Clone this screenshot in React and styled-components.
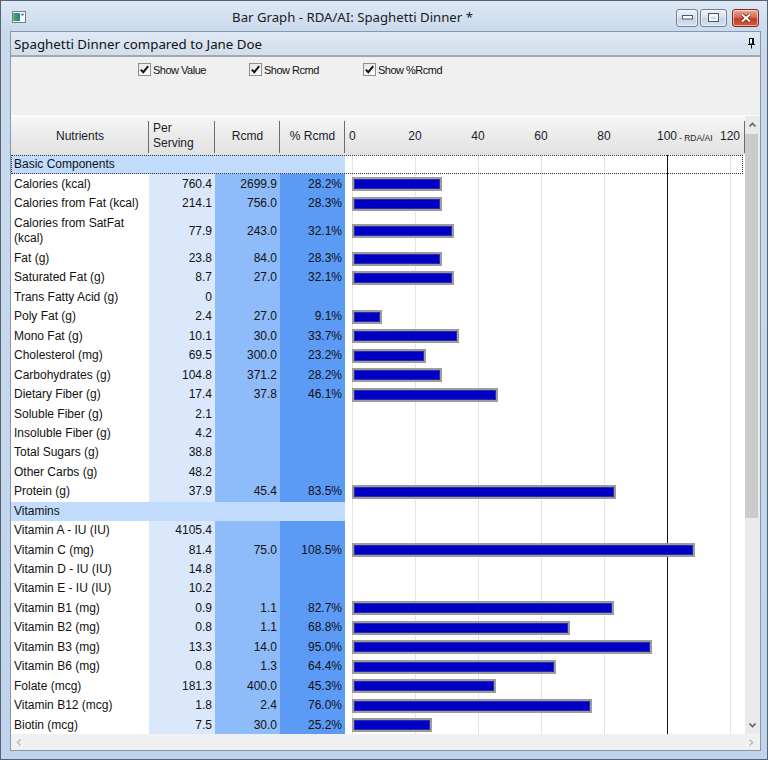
import React from 'react';
import styled, { createGlobalStyle } from 'styled-components';

const GlobalStyle = createGlobalStyle`
  html, body { margin: 0; padding: 0; background: #fff; }
  body { font-family: "Liberation Sans", Arial, sans-serif; color: #000; }
  * { box-sizing: border-box; }
`;

const TICKS = [0, 20, 40, 60, 80, 100, 120];
const SCALE = 3.15;
const ORIGIN = 7;
const COLS = '138px 66px 65px 65px 400px';

const gridLines = TICKS.map((t) => {
  const x = ORIGIN + t * SCALE;
  const c = t === 100 ? '#111' : '#e4e4e4';
  return `linear-gradient(to right, transparent ${x}px, ${c} ${x}px, ${c} ${x + 1}px, transparent ${x + 1}px)`;
}).join(', ');

const sections = [
  {
    title: 'Basic Components',
    focused: true,
    rows: [
      ['Calories (kcal)', '760.4', '2699.9', 28.2],
      ['Calories from Fat (kcal)', '214.1', '756.0', 28.3],
      ['Calories from SatFat (kcal)', '77.9', '243.0', 32.1, true],
      ['Fat (g)', '23.8', '84.0', 28.3],
      ['Saturated Fat (g)', '8.7', '27.0', 32.1],
      ['Trans Fatty Acid (g)', '0', '', null],
      ['Poly Fat (g)', '2.4', '27.0', 9.1],
      ['Mono Fat (g)', '10.1', '30.0', 33.7],
      ['Cholesterol (mg)', '69.5', '300.0', 23.2],
      ['Carbohydrates (g)', '104.8', '371.2', 28.2],
      ['Dietary Fiber (g)', '17.4', '37.8', 46.1],
      ['Soluble Fiber (g)', '2.1', '', null],
      ['Insoluble Fiber (g)', '4.2', '', null],
      ['Total Sugars (g)', '38.8', '', null],
      ['Other Carbs (g)', '48.2', '', null],
      ['Protein (g)', '37.9', '45.4', 83.5],
    ],
  },
  {
    title: 'Vitamins',
    rows: [
      ['Vitamin A - IU (IU)', '4105.4', '', null],
      ['Vitamin C (mg)', '81.4', '75.0', 108.5],
      ['Vitamin D - IU (IU)', '14.8', '', null],
      ['Vitamin E - IU (IU)', '10.2', '', null],
      ['Vitamin B1 (mg)', '0.9', '1.1', 82.7],
      ['Vitamin B2 (mg)', '0.8', '1.1', 68.8],
      ['Vitamin B3 (mg)', '13.3', '14.0', 95.0],
      ['Vitamin B6 (mg)', '0.8', '1.3', 64.4],
      ['Folate (mcg)', '181.3', '400.0', 45.3],
      ['Vitamin B12 (mcg)', '1.8', '2.4', 76.0],
      ['Biotin (mcg)', '7.5', '30.0', 25.2],
    ],
  },
];

const Window = styled.div`
  width: 768px;
  height: 760px;
  display: flex;
  flex-direction: column;
  padding: 0 6px 8px 9px;
  border: 1px solid #59636f;
  background: linear-gradient(#dde8f5, #c9daee 30px, #bfd4ec);
  overflow: hidden;
`;

const TitleBar = styled.div`
  height: 30px;
  flex: none;
  display: grid;
  grid-template-columns: 30px 1fr 96px;
  align-items: center;
`;

const AppIcon = styled.svg`
  margin: 2px 0 0 2px;
`;

const Title = styled.div`
  text-align: center;
  font-family: "Noto Sans", "Liberation Sans", sans-serif;
  font-size: 13.2px;
  color: #1b1b1b;
  padding-top: 2px;
  white-space: nowrap;
`;

const Buttons = styled.div`
  display: flex;
  justify-content: flex-end;
  gap: 2px;
  margin-top: 3px;
  padding-right: 2px;
`;

const WinButton = styled.div`
  width: ${(p) => p.$w}px;
  height: 18px;
  border: 1px solid ${(p) => (p.$close ? '#7a2c20' : '#6f7e90')};
  border-radius: 3px;
  display: flex;
  align-items: center;
  justify-content: center;
  margin-left: ${(p) => (p.$close ? 3 : 0)}px;
  background: ${(p) =>
    p.$close
      ? 'linear-gradient(#eba898, #d86a52 45%, #c73c22 55%, #d25a3e)'
      : 'linear-gradient(#eef3f9, #d6e1ee 45%, #c3d3e6 55%, #d5e2f1)'};
  box-shadow: inset 0 0 0 1px rgba(255, 255, 255, 0.55);
`;

const Client = styled.div`
  flex: 1;
  display: flex;
  flex-direction: column;
  border: 1px solid #8896a6;
  background: #f0f0f0;
  min-height: 0;
`;

const SubHeader = styled.div`
  height: 25px;
  flex: none;
  display: flex;
  align-items: center;
  justify-content: space-between;
  padding: 0 4px 0 3px;
  background: linear-gradient(#dfe8f4, #d2deec);
  border-bottom: 2px solid #a4a8ad;
  font-family: "Noto Sans", "Liberation Sans", sans-serif;
  font-size: 13.3px;
  color: #111;
`;

const Options = styled.div`
  height: 59px;
  flex: none;
  display: flex;
  align-items: flex-start;
  padding: 6px 0 0 127px;
  background: #f0f0f0;
  border-bottom: 1px solid #fbfbfb;
`;

const Option = styled.label`
  width: ${(p) => p.$w}px;
  display: flex;
  align-items: center;
  gap: 2px;
  font-size: 11px;
  letter-spacing: -0.5px;
  color: #111;
`;

const Box = styled.span`
  width: 13px;
  height: 13px;
  border: 1px solid #8e8f8f;
  background: linear-gradient(135deg, #e6e6e6, #fff);
  display: flex;
  align-items: center;
  justify-content: center;
`;

const GridArea = styled.div`
  flex: 1;
  display: flex;
  min-height: 0;
  background: #fff;
`;

const Table = styled.div`
  width: 734px;
  display: flex;
  flex-direction: column;
  overflow: hidden;
`;

const HeaderRow = styled.div`
  height: 39px;
  flex: none;
  display: grid;
  grid-template-columns: ${COLS};
  background: linear-gradient(#f6f6f6, #ececec 45%, #e1e1e1);
  border-top: 1px solid #fff;
  font-size: 12px;
  color: #1a1a2a;
`;

const HeadCell = styled.div`
  position: relative;
  display: flex;
  align-items: center;
  justify-content: ${(p) => (p.$left ? 'flex-start' : 'center')};
  padding: 0 4px;
  line-height: 15px;
  &::after {
    content: '';
    position: absolute;
    right: 0;
    top: 4px;
    bottom: 2px;
    width: 1px;
    background: #6c6c6c;
  }
`;

const AxisCell = styled(HeadCell)`
  padding: 0;
`;

const Tick = styled.span`
  position: absolute;
  top: 12px;
  transform: translateX(${(p) => (p.$first ? '-3px' : '-50%')});
  white-space: nowrap;
`;

const RdaLabel = styled.span`
  position: absolute;
  top: 14px;
  font-size: 8.5px;
  white-space: nowrap;
`;

const Body = styled.div`
  flex: 1;
  overflow: hidden;
`;

const Row = styled.div`
  display: grid;
  grid-template-columns: ${COLS};
  height: ${(p) => (p.$tall ? 35.5 : 19.45)}px;
  font-size: 12px;
  line-height: 15px;
  color: #111;
  outline: ${(p) => (p.$focused ? '1px dotted #333' : 'none')};
  outline-offset: -1px;
  margin-right: ${(p) => (p.$focused ? 2 : 0)}px;
`;

const CategoryCell = styled.div`
  grid-column: span 4;
  background: #c1dcfd;
  display: flex;
  align-items: center;
  padding-left: 3px;
`;

const NameCell = styled.div`
  background: #fff;
  display: flex;
  align-items: center;
  padding: 0 3px;
`;

const NumCell = styled.div`
  background: ${(p) => p.$bg};
  display: flex;
  align-items: center;
  justify-content: flex-end;
  padding-right: 3px;
`;

const ChartCell = styled.div`
  background-color: #fff;
  background-image: ${gridLines};
  display: flex;
  align-items: center;
  padding-left: ${ORIGIN}px;
`;

const Bar = styled.div`
  height: 14px;
  background: #0000c4;
  border: 2px solid #9c9c9c;
  box-shadow: inset 0 0 0 1px #2b2bb0;
`;

const VScroll = styled.div`
  width: 15px;
  flex: none;
  display: flex;
  flex-direction: column;
  background: #eaeaea;
`;

const ScrollBtn = styled.div`
  height: ${(p) => p.$h}px;
  flex: none;
  display: flex;
  align-items: center;
  justify-content: center;
`;

const Thumb = styled.div`
  height: 384px;
  flex: none;
  margin-right: 2px;
  background: #cbcbcb;
`;

const Spacer = styled.div`
  flex: 1;
`;

const HScroll = styled.div`
  height: 16px;
  flex: none;
  display: flex;
  align-items: center;
  justify-content: space-between;
  padding: 0 4px 0 4px;
  background: #f0f0f0;
`;

const Chevron = ({ dir, color = '#606060' }) => {
  const paths = {
    up: 'M1.5 5.5 L4.5 2.5 L7.5 5.5',
    down: 'M1.5 2.5 L4.5 5.5 L7.5 2.5',
    left: 'M5.5 1.5 L2.5 4.5 L5.5 7.5',
    right: 'M2.5 1.5 L5.5 4.5 L2.5 7.5',
  };
  return (
    <svg width="9" height="9" viewBox="0 0 9 9">
      <path d={paths[dir]} fill="none" stroke={color} strokeWidth="1.6" />
    </svg>
  );
};

const Check = () => (
  <svg width="11" height="11" viewBox="0 0 11 11">
    <path d="M1.8 5.6 L4.3 8.2 L9.2 2.2" fill="none" stroke="#111" strokeWidth="2" />
  </svg>
);

const Pin = () => (
  <svg width="9" height="11" viewBox="0 0 9 11">
    <rect x="2.5" y="0.5" width="4" height="5.5" fill="#fff" stroke="#111" />
    <rect x="5" y="1" width="1.5" height="5" fill="#111" />
    <path d="M1 6.5 H8" stroke="#111" />
    <path d="M4.5 7 V10.5" stroke="#111" />
  </svg>
);

const Section = ({ title, focused, rows }) => (
  <>
    <Row $focused={focused}>
      <CategoryCell>{title}</CategoryCell>
      <ChartCell />
    </Row>
    {rows.map(([name, per, rcmd, pct, tall]) => (
      <Row key={name} $tall={tall}>
        <NameCell>{name}</NameCell>
        <NumCell $bg="#dbe8fc">{per}</NumCell>
        <NumCell $bg="#8ebbf9">{rcmd}</NumCell>
        <NumCell $bg="#5b9bf6">{pct == null ? '' : `${pct.toFixed(1)}%`}</NumCell>
        <ChartCell>{pct != null && <Bar style={{ width: pct * SCALE + 1 }} />}</ChartCell>
      </Row>
    ))}
  </>
);

export default function App() {
  return (
    <>
      <GlobalStyle />
      <Window>
        <TitleBar>
          <AppIcon width="14" height="12" viewBox="0 0 14 12">
            <rect x="0.5" y="0.5" width="13" height="11" fill="#fff" stroke="#6f7f95" />
            <rect x="1.5" y="2" width="6.5" height="8" fill="#2f8a8a" />
            <rect x="1.5" y="2" width="3" height="8" fill="#47a06a" />
            <rect x="9.5" y="2.5" width="2" height="2" fill="#3b5a86" />
          </AppIcon>
          <Title>Bar Graph - RDA/AI: Spaghetti Dinner *</Title>
          <Buttons>
            <WinButton $w={22}>
              <svg width="11" height="5" viewBox="0 0 11 5">
                <rect x="0.5" y="0.5" width="10" height="3.5" fill="#fff" stroke="#4d5a6b" />
              </svg>
            </WinButton>
            <WinButton $w={27}>
              <svg width="11" height="9" viewBox="0 0 11 9">
                <rect x="0.5" y="0.5" width="10" height="8" fill="none" stroke="#4d5a6b" />
                <rect x="2" y="2.5" width="7" height="4.5" fill="none" stroke="#fff" strokeWidth="1.5" />
              </svg>
            </WinButton>
            <WinButton $w={27} $close>
              <svg width="12" height="10" viewBox="0 0 12 10">
                <path d="M2 1.5 L10 8.5 M10 1.5 L2 8.5" stroke="#5a1c12" strokeWidth="3.4" />
                <path d="M2 1.5 L10 8.5 M10 1.5 L2 8.5" stroke="#fff" strokeWidth="2" />
              </svg>
            </WinButton>
          </Buttons>
        </TitleBar>

        <Client>
          <SubHeader>
            <span>Spaghetti Dinner compared to Jane Doe</span>
            <Pin />
          </SubHeader>

          <Options>
            <Option $w={111}>
              <Box><Check /></Box>Show Value
            </Option>
            <Option $w={114}>
              <Box><Check /></Box>Show Rcmd
            </Option>
            <Option $w={120}>
              <Box><Check /></Box>Show %Rcmd
            </Option>
          </Options>

          <GridArea>
            <Table>
              <HeaderRow>
                <HeadCell>Nutrients</HeadCell>
                <HeadCell $left>Per<br />Serving</HeadCell>
                <HeadCell>Rcmd</HeadCell>
                <HeadCell>% Rcmd</HeadCell>
                <AxisCell>
                  {TICKS.map((t) => (
                    <Tick key={t} $first={t === 0} style={{ left: ORIGIN + t * SCALE }}>
                      {t}
                    </Tick>
                  ))}
                  <RdaLabel style={{ left: ORIGIN + 100 * SCALE + 12 }}>- RDA/AI</RdaLabel>
                </AxisCell>
              </HeaderRow>
              <Body>
                {sections.map((s) => (
                  <Section key={s.title} {...s} />
                ))}
              </Body>
            </Table>
            <VScroll>
              <ScrollBtn $h={18}><Chevron dir="up" /></ScrollBtn>
              <Thumb />
              <Spacer />
              <ScrollBtn $h={17}><Chevron dir="down" /></ScrollBtn>
            </VScroll>
          </GridArea>

          <HScroll>
            <Chevron dir="left" color="#bdbdbd" />
            <Chevron dir="right" color="#bdbdbd" />
          </HScroll>
        </Client>
      </Window>
    </>
  );
}
